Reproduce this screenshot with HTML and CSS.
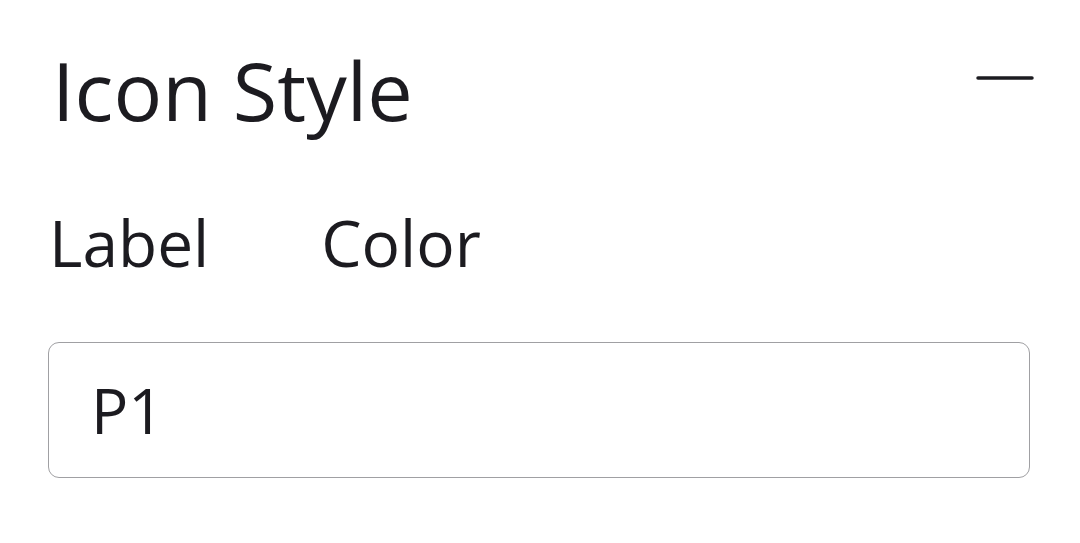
FILE: index.html
```html
<!DOCTYPE html>
<html lang="en">
<head>
  <meta charset="UTF-8" />
  <meta name="viewport" content="width=device-width, initial-scale=1.0" />
  <title>Icon Style</title>
  <link rel="stylesheet" href="styles.css">
</head>
<body>
  <div class="panel">
    <div class="panel-head">
      <h2>Icon Style</h2>
      <button class="collapse" aria-label="Collapse">
        <svg width="58" height="6" viewBox="0 0 58 6">
          <line x1="2" y1="3" x2="56" y2="3" stroke="#1c1b20" stroke-width="3.5" stroke-linecap="round" />
        </svg>
      </button>
    </div>

    <div class="tabs">
      <span class="tab">Label</span>
      <span class="tab">Color</span>
    </div>

    <input class="field" type="text" value="P1" />
  </div>
</body>
</html>
```

FILE: styles.css
```css
body {
  margin: 0;
  background: #ffffff;
  font-family: 'Open Sans', 'Noto Sans', sans-serif;
  color: #1c1b20;
}

.panel {
  padding: 41px 50px 0 49px;
}

.panel-head {
  display: flex;
  justify-content: space-between;
  align-items: flex-start;
}

.panel-head h2 {
  margin: 0 0 0 3px;
  font-size: 81px;
  font-weight: 400;
  line-height: 1.2;
}

.collapse {
  background: none;
  border: none;
  padding: 0;
  margin: 34px -4px 0 0;
  cursor: pointer;
}

.collapse svg {
  display: block;
}

.tabs {
  display: flex;
  gap: 112px;
  margin-top: 67px;
  font-size: 64px;
  line-height: 1.2;
}

.field {
  display: block;
  box-sizing: border-box;
  width: calc(100% + 1px);
  height: 136px;
  margin: 60px 0 0 -1px;
  padding: 0 0 0 42px;
  border: 1.5px solid #a0a0a3;
  border-radius: 11px;
  font-family: inherit;
  font-size: 62px;
  color: #1c1b20;
  outline: none;
}
```
